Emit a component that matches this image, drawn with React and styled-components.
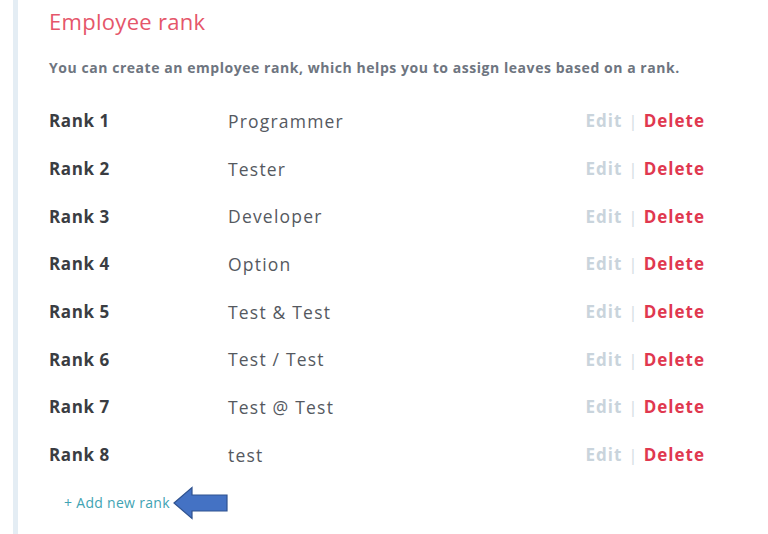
import React from 'react';
import styled, { createGlobalStyle } from 'styled-components';

const GlobalStyle = createGlobalStyle`
  html, body {
    margin: 0;
    padding: 0;
    background: #fff;
  }
  body {
    font-family: "Open Sans", "Liberation Sans", sans-serif;
  }
`;

const ranks = [
  { label: 'Rank 1', name: 'Programmer' },
  { label: 'Rank 2', name: 'Tester' },
  { label: 'Rank 3', name: 'Developer' },
  { label: 'Rank 4', name: 'Option' },
  { label: 'Rank 5', name: 'Test & Test' },
  { label: 'Rank 6', name: 'Test / Test' },
  { label: 'Rank 7', name: 'Test @ Test' },
  { label: 'Rank 8', name: 'test' },
];

const ArrowLeft = () => (
  <svg width="56" height="34" viewBox="0 0 56 34">
    <path
      d="M1 17 L19 1.5 L19 9 L54 9 L54 25 L19 25 L19 32.5 Z"
      fill="#4472c4"
      stroke="#2f528f"
      strokeWidth="1.2"
      strokeLinejoin="miter"
    />
  </svg>
);

const App = () => {
  return (
    <>
      <GlobalStyle />
      <Page>
        <Title>Employee rank</Title>
        <Description>
          You can create an employee rank, which helps you to assign leaves based on a rank.
        </Description>
        <RankList>
          {ranks.map((r) => (
            <RankRow key={r.label}>
              <RankLabel>{r.label}</RankLabel>
              <RankName>{r.name}</RankName>
              <Actions>
                <EditLink href="#">Edit</EditLink>
                <Divider>|</Divider>
                <DeleteLink href="#">Delete</DeleteLink>
              </Actions>
            </RankRow>
          ))}
        </RankList>
        <AddRow>
          <AddLink href="#">+ Add new rank</AddLink>
          <ArrowLeft />
        </AddRow>
      </Page>
    </>
  );
};

export default App;

const Page = styled.div`
  margin-left: 13px;
  border-left: 5px solid #e4edf4;
  min-height: 534px;
  box-sizing: border-box;
  padding: 6px 63px 0 31px;
`;

const Title = styled.h2`
  margin: 0;
  font-size: 22px;
  font-weight: 400;
  line-height: 30px;
  letter-spacing: 0.3px;
  color: #e5566a;
`;

const Description = styled.p`
  margin: 22px 0 19px;
  font-size: 14px;
  font-weight: 700;
  line-height: 20px;
  letter-spacing: 0.55px;
  color: #6e7580;
`;

const RankList = styled.div`
  display: flex;
  flex-direction: column;
`;

const RankRow = styled.div`
  display: grid;
  grid-template-columns: 179px 1fr auto;
  align-items: center;
  height: 47.7px;
`;

const RankLabel = styled.span`
  font-size: 17px;
  font-weight: 700;
  letter-spacing: 0.6px;
  color: #3a3d42;
`;

const RankName = styled.span`
  font-size: 17.5px;
  font-weight: 400;
  letter-spacing: 1.2px;
  color: #55595f;
`;

const Actions = styled.div`
  display: flex;
  align-items: center;
  gap: 6px;
  font-size: 17px;
  font-weight: 700;
  letter-spacing: 1px;
`;

const EditLink = styled.a`
  color: #c9d4dc;
  text-decoration: none;
`;

const Divider = styled.span`
  color: #d5dde3;
  font-weight: 400;
  letter-spacing: 0;
`;

const DeleteLink = styled.a`
  color: #e0384f;
  text-decoration: none;
`;

const AddRow = styled.div`
  display: flex;
  align-items: center;
  gap: 3px;
  margin-top: 7px;
  padding-left: 15px;
`;

const AddLink = styled.a`
  font-size: 14px;
  color: #3fa3b3;
  text-decoration: none;
  letter-spacing: 0.3px;
`;
